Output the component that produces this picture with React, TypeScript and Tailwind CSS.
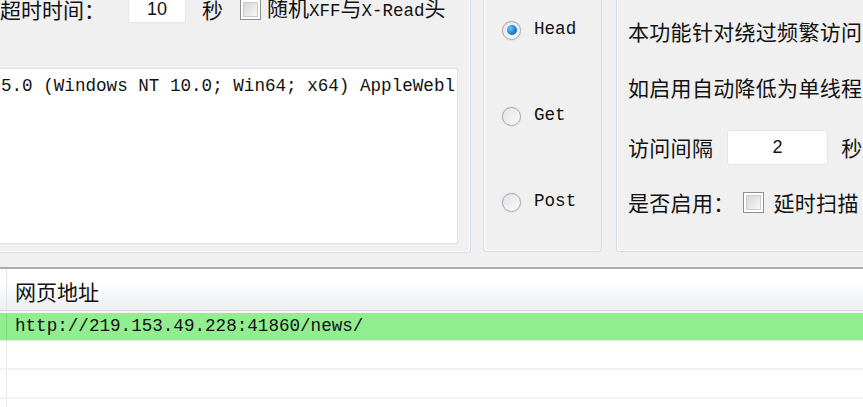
import React from "react";

const cjk = "font-['SimSun','Noto_Sans_CJK_SC',sans-serif]";
const mono = "font-['Liberation_Mono','Noto_Sans_CJK_SC',monospace]";

const Check = () => (
  <span className="inline-block w-[21px] h-[21px] border border-[#8e8f8f] bg-white p-[2px] shrink-0">
    <span className="block w-full h-full border border-[#c9cbcf] bg-linear-to-br from-[#d6d7d9] to-[#f7f7f7]" />
  </span>
);

const Radio = ({ checked }: { checked?: boolean }) => (
  <span className="flex items-center justify-center w-[19px] h-[19px] rounded-full border border-[#a7a9ad] bg-linear-to-br from-[#e2e3e5] to-[#fbfbfb] shadow-[0_0_0_1px_#e4e6e8] shrink-0">
    {checked && (
      <span className="block w-[10px] h-[10px] rounded-full bg-radial-[at_35%_35%] from-[#6fc3ff] via-[#1f86d6] to-[#0b4f97]" />
    )}
  </span>
);

const Field = ({ value, className }: { value: string; className: string }) => (
  <div
    className={`flex items-center justify-center bg-white border border-[#e1e6ec] rounded-[3px] text-[18px] font-['Liberation_Sans',sans-serif] text-[#111] shrink-0 ${className}`}
  >
    {value}
  </div>
);

const methods = [
  { label: "Head", checked: true },
  { label: "Get" },
  { label: "Post" },
];

export default function App() {
  return (
    <div className="w-[863px] h-[407px] overflow-hidden bg-[#f0f0f0] text-[#111] flex flex-col">
      {/* settings area */}
      <div className="h-[267px] flex shrink-0">
        {/* request group */}
        <div className="w-[471px] h-[253px] shrink-0 border-r border-b border-[#d3dce3] rounded-br-[4px] shadow-[inset_-1px_-1px_0_#fdfdfd] flex flex-col pr-[12px]">
          <div className="h-[28px] -mt-[5px] flex items-center text-[21px]">
            <span className={`${cjk} leading-none`}>超时时间：</span>
            <Field value="10" className="ml-[23px] w-[58px] h-[27px]" />
            <span className={`${cjk} leading-none ml-[16px]`}>秒</span>
            <span className="ml-[17px] flex">
              <Check />
            </span>
            <span className={`${cjk} leading-none ml-[6px] whitespace-nowrap`}>
              随机<span className={`${mono} text-[17.5px]`}>XFF</span>与
              <span className={`${mono} text-[17.5px]`}>X-Read</span>头
            </span>
          </div>
          <div className="mt-[45px] h-[176px] bg-white border-r border-y border-[#dde2e8] rounded-r-[3px] pt-[7px] pl-[1px] overflow-hidden">
            <div className={`${mono} text-[17.6px] leading-[20px] whitespace-nowrap`}>
              5.0 (Windows NT 10.0; Win64; x64) AppleWebl
            </div>
          </div>
        </div>

        {/* method group */}
        <div className="ml-[12px] w-[119px] h-[252px] shrink-0 border-x border-b border-[#d3dce3] rounded-b-[4px] shadow-[inset_1px_-1px_0_#fdfdfd] flex flex-col pl-[18px] pt-[20px] gap-[66px]">
          {methods.map((m) => (
            <div key={m.label} className="flex items-center h-[20px]">
              <Radio checked={m.checked} />
              <span className={`${mono} text-[17.6px] ml-[13px] leading-none`}>{m.label}</span>
            </div>
          ))}
        </div>

        {/* delay group */}
        <div className="ml-[14px] w-[260px] h-[252px] shrink-0 border-l border-b border-[#d3dce3] rounded-bl-[4px] shadow-[inset_1px_-1px_0_#fdfdfd] flex flex-col pl-[11px] whitespace-nowrap text-[21px] tracking-[0.3px]">
          <div className={`${cjk} h-[24px] mt-[19px] flex items-center leading-none`}>本功能针对绕过频繁访问</div>
          <div className={`${cjk} h-[24px] mt-[32px] flex items-center leading-none`}>如启用自动降低为单线程</div>
          <div className="h-[35px] mt-[31px] flex items-center">
            <span className={`${cjk} leading-none`}>访问间隔</span>
            <Field value="2" className="ml-[14px] w-[101px] h-[35px]" />
            <span className={`${cjk} leading-none ml-[13px]`}>秒</span>
          </div>
          <div className="h-[24px] mt-[25px] flex items-center">
            <span className={`${cjk} leading-none`}>是否启用：</span>
            <span className="ml-[8px] flex">
              <Check />
            </span>
            <span className={`${cjk} leading-none ml-[10px]`}>延时扫描</span>
          </div>
        </div>
      </div>

      {/* splitter */}
      <div className="h-[2px] bg-[#a9abb0] shrink-0" />

      {/* result table */}
      <div className="flex-1 bg-white flex flex-col">
        <div className="h-[42px] shrink-0 flex bg-linear-to-b from-white from-30% to-[#eceef1] border-b border-[#d6d8db]">
          <div className="w-[7px] border-r border-[#e3e5e8]" />
          <div className={`${cjk} text-[21px] leading-none pl-[8px] pt-[12px]`}>网页地址</div>
        </div>
        <div className="h-[30px] shrink-0 flex border-t-2 border-[#f3f6f3] border-b border-b-[#e2ede2]">
          <div className="w-[7px] bg-[#90ee90] border-r border-[#7fd77f]" />
          <div className="flex-1 bg-[#90ee90] flex items-center pl-[8px]">
            <span className={`${mono} text-[17.6px] leading-none`}>http://219.153.49.228:41860/news/</span>
          </div>
        </div>
        {[0, 1, 2].map((i) => (
          <div key={i} className="h-[29px] flex border-b-2 border-[#f2f2f2] shrink-0">
            <div className="w-[7px] border-r border-[#e8e8e8]" />
            <div className="flex-1" />
          </div>
        ))}
      </div>
    </div>
  );
}
